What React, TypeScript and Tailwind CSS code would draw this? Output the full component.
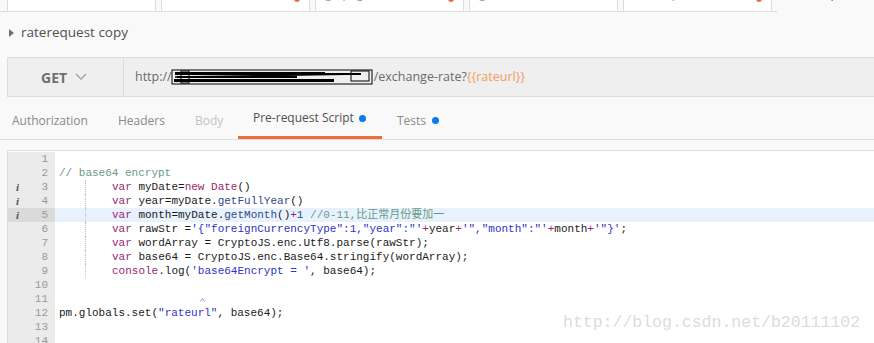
import React from "react";

const K = "text-[#9a1f74]";
const S = "text-[#3131c7]";
const C = "text-[#6a9a86]";
const M = "text-[#34488a]";

type Seg = [string, string?];

const lines: { indent: boolean; info?: boolean; hl?: boolean; segs: Seg[] }[] = [
  { indent: false, segs: [] },
  { indent: false, segs: [["// base64 encrypt", C]] },
  { indent: true, info: true, segs: [["var", K], [" myDate="], ["new", K], [" "], ["Date", K], ["()"]] },
  { indent: true, info: true, segs: [["var", K], [" year=myDate."], ["getFullYear", M], ["()"]] },
  {
    indent: true,
    info: true,
    hl: true,
    segs: [["var", K], [" month=myDate."], ["getMonth", M], ["()"], ["+", K], ["1", M], [" "], ["//0-11,比正常月份要加一", C]],
  },
  {
    indent: true,
    segs: [
      ["var", K],
      [" rawStr ="],
      ["'{\"foreignCurrencyType\":1,\"year\":\"'", S],
      ["+", K],
      ["year"],
      ["+", K],
      ["'\",\"month\":\"'", S],
      ["+", K],
      ["month"],
      ["+", K],
      ["'\"}'", S],
      [";"],
    ],
  },
  { indent: true, segs: [["var", K], [" wordArray = CryptoJS.enc.Utf8.parse(rawStr);"]] },
  { indent: true, segs: [["var", K], [" base64 = CryptoJS.enc.Base64.stringify(wordArray);"]] },
  { indent: true, segs: [["console", K], [".log("], ["'base64Encrypt = '", S], [", base64);"]] },
  { indent: false, segs: [] },
  { indent: false, segs: [] },
  { indent: false, segs: [["pm.globals.set("], ["\"rateurl\"", S], [", base64);"]] },
  { indent: false, segs: [] },
  { indent: false, segs: [] },
];

const topTabs = [
  { label: "New Tab", dot: false },
  { label: "test", dot: true },
  { label: "getpage", dot: true },
  { label: "getdata", dot: false },
  { label: "raterequest", dot: true },
];

export default function App() {
  return (
    <div
      className="w-[874px] h-[343px] overflow-hidden bg-[#f9f9f9] relative"
      style={{ fontFamily: "'Open Sans', 'Noto Sans', sans-serif" }}
    >
      {/* top tab strip (cut off) */}
      <div className="h-[12px] flex overflow-hidden">
        <div className="w-[7px] shrink-0 border-b border-[#dddddd]" />
        {topTabs.map((t, i) => (
          <div key={i} className="flex shrink-0">
            <div className="w-[149px] h-[12px] bg-white border-x border-b border-[#dddddd] relative overflow-hidden">
              <span className="absolute left-[9px] top-[-13px] text-[12px] text-[#9a9a9a] leading-[14px] whitespace-nowrap">{t.label}</span>
              {t.dot && <span className="absolute right-[9px] top-[-4px] w-[6px] h-[6px] rounded-full bg-[#f26b3a]" />}
            </div>
            <div className="w-[5px] border-b border-[#dddddd]" />
          </div>
        ))}
        <div className="flex-1 relative">
          <span className="absolute left-[15px] top-[-13px] text-[12px] text-[#505050] leading-[14px] whitespace-nowrap">
            raterequest copy
          </span>
        </div>
      </div>

      {/* title */}
      <div className="h-[45px] flex items-center pl-[9px] pb-[4px]">
        <svg width="6" height="8" viewBox="0 0 6 8" className="mr-[6px]">
          <path d="M0 0 L5 4 L0 8 Z" fill="#707070" />
        </svg>
        <span className="text-[13.5px] text-[#505050]">raterequest copy</span>
      </div>

      {/* url bar */}
      <div className="ml-[7px] h-[40px] flex bg-[#efefef] border border-r-0 border-[#dddddd]">
        <div className="w-[116px] flex items-center border-r border-[#dddddd] pl-[33px]">
          <span className="text-[14px] font-bold text-[#707070]">GET</span>
          <svg width="12" height="8" viewBox="0 0 12 8" className="ml-[8px]">
            <path d="M1 1 L6 6 L11 1" fill="none" stroke="#a0a0a0" strokeWidth="1.3" />
          </svg>
        </div>
        <div className="flex items-center pl-[11px] text-[12.5px] text-[#6b6b6b]">
          <span>http://</span>
          <svg width="202" height="18" viewBox="0 0 202 18" className="mx-[-1px]">
            <rect x="1" y="2" width="200" height="14" fill="none" stroke="#000" strokeWidth="1" />
            <rect x="4" y="4" width="150" height="3" fill="#000" />
            <rect x="6" y="8" width="120" height="2" fill="#000" />
            <rect x="3" y="11" width="160" height="3" fill="#000" />
            <rect x="130" y="5" width="60" height="2" fill="#000" />
            <rect x="10" y="3" width="8" height="12" fill="none" stroke="#000" />
            <rect x="180" y="3" width="18" height="10" fill="none" stroke="#000" />
            <path d="M4 9 L190 6" stroke="#000" strokeWidth="1.5" />
          </svg>
          <span className="ml-[2px]">/exchange-rate?</span>
          <span className="text-[#f89b5d]">{"{{rateurl}}"}</span>
        </div>
      </div>

      {/* request tabs */}
      <div className="h-[43px] flex text-[12px] border-b border-[#dddddd]">
        <div className="pl-[12px] w-[118px] pt-[5px] flex items-center text-[#8a8a8a]">Authorization</div>
        <div className="w-[77px] pt-[5px] flex items-center text-[#8a8a8a]">Headers</div>
        <div className="w-[43px] pt-[5px] flex items-center text-[#c4c4c4]">Body</div>
        <div className="w-[144px] flex flex-col">
          <div className="flex-1 flex items-center pt-[3px] pl-[15px] text-[#505050]">
            Pre-request Script
            <span className="ml-[5px] w-[7px] h-[7px] rounded-full bg-[#097bed]" />
          </div>
          <div className="h-[3px] bg-[#f26b3a]" />
        </div>
        <div className="ml-[15px] pt-[5px] flex items-center text-[#8a8a8a]">
          Tests
          <span className="ml-[6px] w-[7px] h-[7px] rounded-full bg-[#097bed]" />
        </div>
      </div>

      {/* editor */}
      <div className="mt-[10px] ml-[7px] bg-white border-t border-l border-[#dddddd] pt-[1px]">
        {lines.map((ln, i) => (
          <div key={i} className="flex h-[14px] leading-[14px] text-[11px]" style={{ fontFamily: "'Liberation Mono', 'Noto Sans CJK SC', monospace" }}>
            <div className={`w-[47px] shrink-0 flex items-center pr-[7px] ${ln.hl ? "bg-[#dadada]" : "bg-[#ebebeb]"}`}>
              <span className="w-[14px] pl-[8px] text-[#555] italic font-bold text-[11px]" style={{ fontFamily: "'Liberation Serif', serif" }}>
                {ln.info ? "i" : ""}
              </span>
              <span className="flex-1 text-right text-[#999]">{i + 1}</span>
            </div>
            <div className={`flex-1 flex pl-[4px] whitespace-pre text-[#1a1a1a] ${ln.hl ? "bg-[#e8f2fe]" : ""}`}>
              {ln.indent && (
                <>
                  <span className="w-[26px] shrink-0" />
                  <span className="w-[27px] shrink-0 border-l border-dotted border-[#c0c0c0]" />
                </>
              )}
              <span>
                {ln.segs.map((s, j) => (
                  <span key={j} className={s[1] ?? ""}>
                    {s[0]}
                  </span>
                ))}
              </span>
            </div>
          </div>
        ))}
      </div>

      {/* cursor artifact */}
      <svg className="absolute left-[200px] top-[298px]" width="5" height="4" viewBox="0 0 5 4">
        <path d="M0.5 3.5 L2.5 0.5 L4.5 3.5" fill="none" stroke="#6aa0e8" strokeWidth="1" />
      </svg>

      {/* watermark */}
      <div
        className="absolute left-[563px] top-[311px] text-[16.5px] text-[#dcdcdc] whitespace-nowrap"
        style={{ fontFamily: "'Liberation Mono', monospace" }}
      >
        http://blog.csdn.net/b20111102
      </div>
    </div>
  );
}
